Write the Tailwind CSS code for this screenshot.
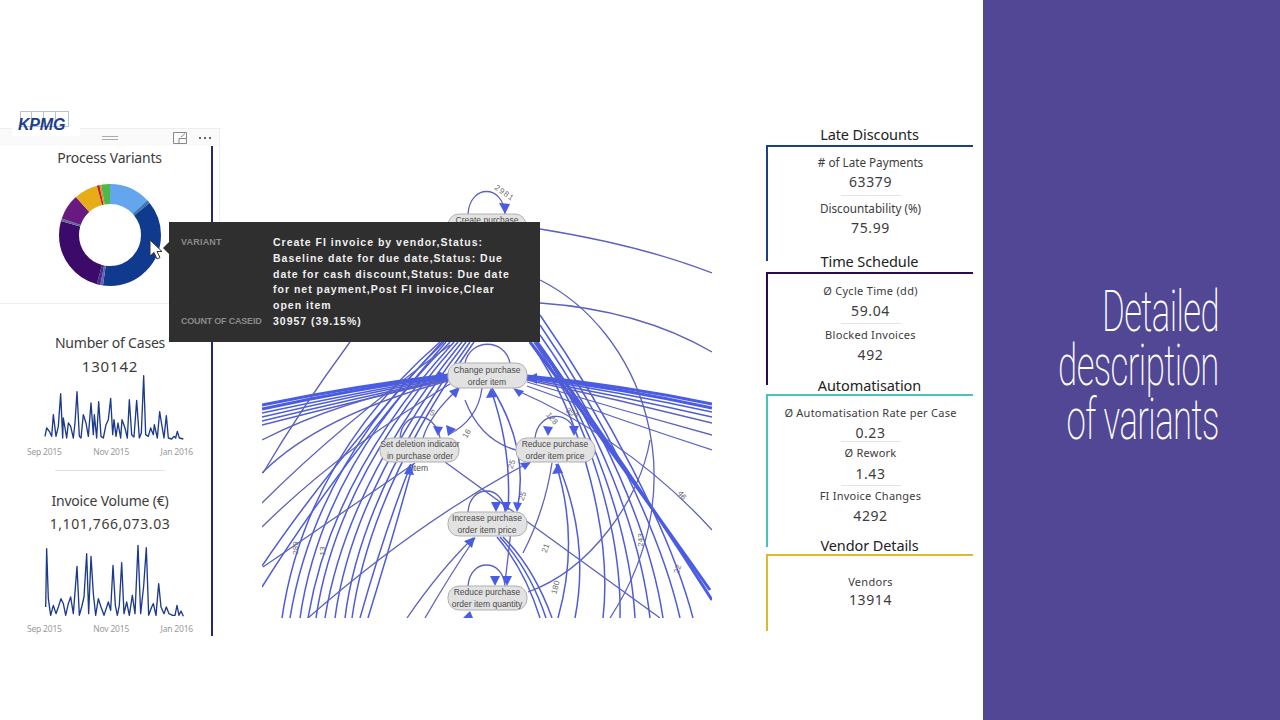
<!DOCTYPE html>
<html lang="en">
<head>
    <meta charset="UTF-8">
    <title>Detailed description of variants</title>
    <script src="https://cdn.jsdelivr.net/npm/@tailwindcss/browser@4"></script>
</head>
<body class="bg-white overflow-hidden">
<div class="relative flex w-[1280px] h-[720px] bg-white font-['Noto_Sans',sans-serif] text-[#3c3c3c]">

    <!-- left column -->
    <div class="w-[213px] h-[490px] mt-[146px] border-r-2 border-[#1f2a78] shrink-0">
        <div class="-mt-[18px] w-[220px] h-[176px] border-t border-b border-r border-[#eeeeee] flex flex-col items-center">
            <div class="w-full h-[17px] bg-[#fafafa] relative flex justify-end items-center gap-[11px] pr-[8px]">
                <div class="absolute left-[102px] top-[7px] w-[16px] h-[4px] border-t border-b border-[#aaaaaa]"></div>
                <svg width="16" height="14" viewBox="0 0 16 14" fill="none" stroke="#888888" stroke-width="1"><path d="M1.500 1.500h13v11h-13z"/><path d="M7 12.500v-5h7.500M9 6l4-3.500"/></svg>
                <div class="flex gap-[3px]"><i class="w-[2px] h-[2px] bg-[#666666]"></i><i class="w-[2px] h-[2px] bg-[#666666]"></i><i class="w-[2px] h-[2px] bg-[#666666]"></i></div>
            </div>
            <div class="w-[212px] text-center text-[14px] leading-[20px] mt-[2px] tracking-[-0.2px]">Process Variants</div>
            <svg class="mt-[15px]" width="104" height="104" viewBox="0 0 104 104" fill="none" stroke-width="20">
                <g transform="rotate(-90 52 52)">
                    <circle cx="52" cy="52" r="41" pathLength="360" stroke="#63a6ee" stroke-dasharray="47 313"/>
                    <circle cx="52" cy="52" r="41" pathLength="360" stroke="#3b78b8" stroke-dasharray="4 356" stroke-dashoffset="-47"/>
                    <circle cx="52" cy="52" r="41" pathLength="360" stroke="#0f3a8e" stroke-dasharray="137 223" stroke-dashoffset="-51"/>
                    <circle cx="52" cy="52" r="41" pathLength="360" stroke="#5c62b4" stroke-dasharray="3 357" stroke-dashoffset="-188"/>
                    <circle cx="52" cy="52" r="41" pathLength="360" stroke="#4a2a8a" stroke-dasharray="4 356" stroke-dashoffset="-191"/>
                    <circle cx="52" cy="52" r="41" pathLength="360" stroke="#3c0a68" stroke-dasharray="91 269" stroke-dashoffset="-195"/>
                    <circle cx="52" cy="52" r="41" pathLength="360" stroke="#5e6e90" stroke-dasharray="3 357" stroke-dashoffset="-286"/>
                    <circle cx="52" cy="52" r="41" pathLength="360" stroke="#681a80" stroke-dasharray="29 331" stroke-dashoffset="-289"/>
                    <circle cx="52" cy="52" r="41" pathLength="360" stroke="#e6ad18" stroke-dasharray="27 333" stroke-dashoffset="-318"/>
                    <circle cx="52" cy="52" r="41" pathLength="360" stroke="#c2241e" stroke-dasharray="3 357" stroke-dashoffset="-345"/>
                    <circle cx="52" cy="52" r="41" pathLength="360" stroke="#e08a3a" stroke-dasharray="2 358" stroke-dashoffset="-348"/>
                    <circle cx="52" cy="52" r="41" pathLength="360" stroke="#4cb848" stroke-dasharray="10 350" stroke-dashoffset="-350"/>
                </g>
            </svg>
        </div>

        <div class="w-[220px] flex flex-col items-center">
            <div class="text-[14px] leading-[20px] mt-[29px] tracking-[-0.2px]">Number of Cases</div>
            <div class="text-[15px] leading-[20px] mt-[3px] tracking-[0.8px]">130142</div>
            <svg class="-mt-[3px] shrink-0" width="150" height="73" viewBox="105 160 450 219" fill="none" stroke="#1c3a8c" stroke-width="4" stroke-linejoin="round">
                <polyline points="135,350 140,325 148,335 155,350 160,285 168,350 175,320 182,222 188,355 190,295 200,355 205,310 212,320 220,355 225,310 231,216 238,350 243,355 250,285 258,310 265,350 273,250 280,345 283,285 290,355 296,246 303,350 310,355 318,315 325,300 332,236 338,345 342,300 348,350 354,310 362,355 366,300 375,325 382,355 388,240 395,345 402,352 410,242 418,355 424,340 431,168 437,345 445,350 452,325 460,345 463,315 472,355 479,276 486,320 492,355 499,288 505,355 515,358 522,350 527,355 532,335 538,355 550,358"/>
            </svg>
            <div class="w-[166px] flex justify-between text-[8.500px] leading-[12px] text-[#9a9a9a] tracking-[-0.2px]"><span>Sep 2015</span><span>Nov 2015</span><span>Jan 2016</span></div>
            <div class="w-[110px] h-px bg-[#e2e2e2] mt-[12px]"></div>
            <div class="text-[14px] leading-[20px] mt-[20px] tracking-[-0.2px]">Invoice Volume (€)</div>
            <div class="text-[14px] leading-[20px] mt-[3px] tracking-[0.6px]">1,101,766,073.03</div>
            <svg class="mt-[3px] shrink-0" width="150" height="84" viewBox="105 650 450 252" fill="none" stroke="#1c3a8c" stroke-width="4" stroke-linejoin="round">
                <polyline points="137,860 140,685 145,835 152,885 160,855 168,880 175,860 183,835 190,850 197,885 205,850 212,830 220,880 231,738 238,885 245,860 252,830 260,700 266,880 273,708 280,820 287,885 295,835 303,860 312,885 325,845 332,870 339,735 346,855 352,885 358,855 365,727 372,880 380,845 388,885 397,825 405,880 414,675 422,880 431,797 439,682 446,885 455,860 460,850 468,885 476,790 483,860 492,880 499,860 507,880 518,885 525,885 531,855 537,885 543,872 550,888"/>
            </svg>
            <div class="w-[166px] flex justify-between text-[8.500px] leading-[12px] text-[#9a9a9a] mt-[2px] tracking-[-0.2px]"><span>Sep 2015</span><span>Nov 2015</span><span>Jan 2016</span></div>
        </div>
    </div>

    <!-- process graph -->
    <svg class="ml-[49px] mt-[180px] shrink-0" width="450" height="438" viewBox="262 180 450 438" fill="none" font-family="'Liberation Sans',sans-serif">
        <g stroke="#4a5ce4" stroke-width="3">
            <path d="M262 405Q360 385 448 375"/>
            <path d="M262 409Q360 388 448 376"/>
            <path d="M712 404Q620 385 527 376"/>
            <path d="M712 408Q620 388 527 377"/>
            <path d="M530 342C590 420 650 505 710 590"/>
            <path d="M536 342C596 424 656 512 712 600"/>
        </g>
        <g stroke="#4e5cd8" stroke-width="1.500">
            <path d="M262 413Q360 392 448 377"/>
            <path d="M262 417Q360 394 448 378"/>
            <path d="M262 421Q360 397 448 379"/>
            <path d="M262 425Q360 400 448 380"/>
            <path d="M282 618Q305 460 440 342"/>
            <path d="M290 618Q315 465 444 342"/>
            <path d="M300 618Q322 468 450 342"/>
            <path d="M308 618Q332 475 454 342"/>
            <path d="M316 618Q336 480 458 342"/>
            <path d="M325 618Q346 485 462 342"/>
            <path d="M335 618Q352 490 466 342"/>
            <path d="M345 618Q360 495 470 342"/>
            <path d="M352 618Q370 490 474 342"/>
            <path d="M262 587Q335 470 446 342"/>
            <path d="M262 566Q330 465 442 342"/>
            <path d="M360 618Q385 530 411 464"/>
            <path d="M368 618Q395 530 413 464"/>
            <path d="M712 412Q620 392 527 378"/>
            <path d="M712 417Q620 396 527 379"/>
            <path d="M603 618C612 540 585 420 530 342"/>
            <path d="M620 618C622 535 590 420 534 342"/>
            <path d="M635 618C630 530 592 420 536 342"/>
            <path d="M650 618C640 530 596 420 538 342"/>
            <path d="M663 618C650 530 600 420 540 335"/>
            <path d="M680 618C660 530 602 415 540 325"/>
            <path d="M693 618C670 530 606 410 540 315"/>
            <path d="M558 464Q590 540 575 618"/>
            <path d="M556 464Q580 540 558 618"/>
            <path d="M497 537Q525 570 540 618"/>
            <path d="M500 537Q530 570 546 618"/>
            <path d="M503 537Q534 568 552 618"/>
            <path d="M492 388Q530 450 517 510"/>
            <path d="M491 390Q512 450 508 510"/>
        </g>
        <g stroke="#5c62be" stroke-width="1.300">
            <path d="M262 440Q340 400 448 380"/>
            <path d="M262 473Q320 415 448 381"/>
            <path d="M263 473Q300 410 350 342"/>
            <path d="M262 503Q340 425 450 345"/>
            <path d="M262 527Q340 450 450 384"/>
            <path d="M263 567L415 463"/>
            <path d="M445 462L660 618"/>
            <path d="M530 462Q420 520 308 618"/>
            <path d="M407 618Q440 570 473 538"/>
            <path d="M425 618Q450 575 475 538"/>
            <path d="M712 273Q640 245 540 229"/>
            <path d="M712 352Q640 310 540 303"/>
            <path d="M712 423Q620 400 527 380"/>
            <path d="M712 435Q620 410 527 382"/>
            <path d="M712 450Q620 420 527 386"/>
            <path d="M712 530Q630 440 516 390"/>
            <path d="M540 280C640 330 700 480 610 618"/>
            <path d="M528 592C590 570 640 500 650 440"/>
            <path d="M516 450Q480 440 465 400"/>
            <path d="M552 463Q545 510 523 553"/>
            <path d="M513 513L505 583"/>
            <path d="M400 438C402 410 435 410 440 438"/>
            <path d="M535 438C538 410 572 410 575 434"/>
            <path d="M468 512C470 484 503 484 505 512"/>
            <path d="M468 586C470 558 503 558 505 586"/>
            <path d="M468 214C470 184 503 184 505 214"/>
            <path d="M465 363C470 338 505 338 510 363"/>
            <path d="M423 438Q430 415 457 390"/>
            <path d="M482 388Q478 420 448 435"/>
        </g>
        <g fill="#4a5ce4">
            <polygon points="449,376 438,371 438,382"/>
            <polygon points="526,378 537,373 537,384"/>
            <polygon points="505,214 499,203 510,204"/>
            <polygon points="438,436 433,426 443,427"/>
            <polygon points="448,436 446,425 456,429"/>
            <polygon points="460,387 449,391 456,398"/>
            <polygon points="548,436 543,426 553,427"/>
            <polygon points="574,436 569,426 579,426"/>
            <polygon points="513,388 519,397 524,391"/>
            <polygon points="491,388 486,398 497,397"/>
            <polygon points="531,462 520,463 525,470"/>
            <polygon points="410,464 404,474 414,475"/>
            <polygon points="496,512 491,502 501,502"/>
            <polygon points="506,512 501,502 511,502"/>
            <polygon points="517,512 513,502 522,503"/>
            <polygon points="475,537 464,541 472,548"/>
            <polygon points="495,586 490,576 500,576"/>
            <polygon points="507,586 502,576 512,576"/>
            <polygon points="558,463 552,474 563,473"/>
            <polygon points="470,611 463,618 473,618"/>
        </g>
        <g fill="#e2e2e2" stroke="#b0b0b0" stroke-width="1">
            <rect x="448" y="214" width="78" height="24" rx="11"/>
            <rect x="448" y="363" width="79" height="25" rx="11"/>
            <rect x="380" y="438" width="79" height="24" rx="11"/>
            <rect x="516" y="438" width="79" height="24" rx="11"/>
            <rect x="448" y="512" width="79" height="24" rx="11"/>
            <rect x="448" y="586" width="79" height="24" rx="11"/>
        </g>
        <g fill="#4a4a4a" font-size="8.500" text-anchor="middle">
            <text x="487" y="223">Create purchase</text>
            <text x="487" y="372.500">Change purchase</text>
            <text x="487" y="385">order item</text>
            <text x="420" y="446.500">Set deletion indicator</text>
            <text x="420" y="459">in purchase order</text>
            <text x="420" y="471">item</text>
            <text x="555" y="447">Reduce purchase</text>
            <text x="555" y="459">order item price</text>
            <text x="487" y="521">Increase purchase</text>
            <text x="487" y="533">order item price</text>
            <text x="487" y="595">Reduce purchase</text>
            <text x="487" y="607">order item quantity</text>
        </g>
        <g fill="#6a6a6a" font-size="8" text-anchor="middle">
            <text transform="translate(503 195) rotate(35)" letter-spacing="1">2981</text>
            <text transform="translate(431 415) rotate(30)">5</text>
            <text transform="translate(469 435) rotate(-60)">16</text>
            <text transform="translate(298 548) rotate(-90)">289</text>
            <text transform="translate(325 551) rotate(-90)">13</text>
            <text transform="translate(571 415) rotate(30)">354</text>
            <text transform="translate(550 420) rotate(50)">128</text>
            <text transform="translate(514 465) rotate(-70)">25</text>
            <text transform="translate(525 497) rotate(-70)">25</text>
            <text transform="translate(548 549) rotate(-70)">21</text>
            <text transform="translate(643 540) rotate(-90)">243</text>
            <text transform="translate(680 570) rotate(-70)">22</text>
            <text transform="translate(680 497) rotate(50)">46</text>
            <text transform="translate(558 588) rotate(-75)">180</text>
        </g>
    </svg>

    <!-- right column -->
    <div class="w-[207px] ml-[54px] mt-[125px] shrink-0 text-center">
        <div class="text-[14.500px] leading-[18px] text-[#222222] tracking-[-0.1px]">Late Discounts</div>
        <div class="h-[116px] mt-[2px] border-t-2 border-l-2 border-[#1f3f84] flex flex-col items-center pt-[5px] text-[11.700px] leading-[20px]">
            <div>&#35; of Late Payments</div>
            <div class="text-[14px] tracking-[0.6px]">63379</div>
            <div class="w-[60px] h-px bg-[#e4e4e4] mt-[3px] shrink-0"></div>
            <div class="mt-[2px]">Discountability (%)</div>
            <div class="text-[14px] tracking-[0.6px]">75.99</div>
        </div>
        <div class="text-[14.500px] leading-[18px] text-[#222222] -mt-[9px] tracking-[-0.1px]">Time Schedule</div>
        <div class="h-[113px] mt-[2px] border-t-2 border-l-2 border-[#2c0b50] flex flex-col items-center pt-[7px] text-[11px] leading-[20px] tracking-[0.3px]">
            <div>Ø Cycle Time (dd)</div>
            <div class="text-[14px] tracking-[0.6px]">59.04</div>
            <div class="w-[60px] h-px bg-[#e4e4e4] mt-[2px] shrink-0"></div>
            <div class="mt-px">Blocked Invoices</div>
            <div class="text-[14px] tracking-[0.6px]">492</div>
        </div>
        <div class="text-[14.500px] leading-[18px] text-[#222222] -mt-[9px] tracking-[-0.1px]">Automatisation</div>
        <div class="h-[153px] border-t-2 border-l-2 border-[#46c4bc] flex flex-col items-center pt-[7px] text-[11px] leading-[20px] tracking-[0.25px]">
            <div>Ø Automatisation Rate per Case</div>
            <div class="text-[14px] leading-[16px] mt-[2px] tracking-[0.6px]">0.23</div>
            <div class="w-[60px] h-px bg-[#e4e4e4] shrink-0"></div>
            <div class="mt-px">Ø Rework</div>
            <div class="text-[14px] mt-px tracking-[0.6px]">1.43</div>
            <div class="w-[60px] h-px bg-[#e4e4e4] mt-px shrink-0"></div>
            <div>FI Invoice Changes</div>
            <div class="text-[14px] tracking-[0.6px]">4292</div>
        </div>
        <div class="text-[14.500px] leading-[18px] text-[#222222] -mt-[11px] tracking-[-0.1px]">Vendor Details</div>
        <div class="h-[77px] border-t-2 border-l-2 border-[#d8bc2c] flex flex-col items-center pt-[16px] text-[11px] leading-[20px] tracking-[0.3px]">
            <div>Vendors</div>
            <div class="text-[14px] -mt-[2px] tracking-[0.6px]">13914</div>
        </div>
    </div>

    <!-- purple panel -->
    <div class="w-[297px] ml-[10px] shrink-0 bg-[#514795] flex flex-col items-end pt-[284px] pr-[61px] text-white font-['Roboto',sans-serif] font-extralight text-[58px] leading-[54px] tracking-[-1px]">
        <div class="origin-right scale-x-[0.6] whitespace-nowrap">Detailed</div>
        <div class="origin-right scale-x-[0.6] whitespace-nowrap">description</div>
        <div class="origin-right scale-x-[0.6] whitespace-nowrap">of variants</div>
    </div>

    <!-- KPMG logo -->
    <div class="absolute left-[12px] top-[108px] w-[68px] h-[28px] bg-white">
        <div class="absolute left-[8px] top-[3px] flex">
            <i class="w-[12px] h-[16px] border border-[#b9c2d8]"></i><i class="w-[12px] h-[16px] border border-l-0 border-[#b9c2d8]"></i><i class="w-[12px] h-[16px] border border-l-0 border-[#b9c2d8]"></i><i class="w-[13px] h-[16px] border border-l-0 border-[#b9c2d8]"></i>
        </div>
        <div class="absolute left-[6px] top-[8px] font-['Liberation_Sans',sans-serif] font-bold italic text-[16px] leading-[18px] text-[#1c3f8c] tracking-[-0.2px]">KPMG</div>
    </div>

    <!-- tooltip -->
    <div class="absolute left-[169px] top-[222px] w-[371px] h-[120px] bg-[#2f2f2f] pl-[12px] pt-[13px] grid grid-cols-[92px_1fr] content-start font-['Liberation_Sans',sans-serif] font-bold text-[10.500px] leading-[15.800px] text-[#f0f0f0] tracking-[1px]">
        <div class="absolute -left-[6px] top-[20px] w-0 h-0 border-y-[6px] border-y-transparent border-r-[6px] border-r-[#2f2f2f]"></div>
        <div class="text-[9px] text-[#8a8a8a] tracking-[0.2px]">VARIANT</div>
        <div>Create FI invoice by vendor,Status:<br>Baseline date for due date,Status: Due<br>date for cash discount,Status: Due date<br>for net payment,Post FI invoice,Clear<br>open item</div>
        <div class="text-[9px] text-[#8a8a8a] tracking-[-0.2px]">COUNT OF CASEID</div>
        <div>30957 (39.15%)</div>
    </div>

    <!-- mouse cursor -->
    <svg class="absolute left-[149px] top-[239px]" width="15" height="22" viewBox="0 0 15 22"><path d="M1 1v16l4-3.500 3 6.500 3-1.500-3-6h5z" fill="#ffffff" stroke="#333333" stroke-width="1"/></svg>
</div>
</body>
</html>
